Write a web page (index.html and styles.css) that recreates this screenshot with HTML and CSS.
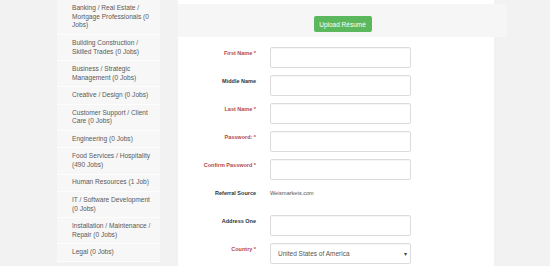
FILE: index.html
```html
<!DOCTYPE html>
<html>
<head>
<meta charset="utf-8">
<link rel="stylesheet" href="styles.css">
</head>
<body>
<div class="page">
  <aside class="sidebar">
    <ul class="cats">
      <li>Banking / Real Estate / Mortgage Professionals (0 Jobs)</li>
      <li>Building Construction / Skilled Trades (0 Jobs)</li>
      <li>Business / Strategic Management (0 Jobs)</li>
      <li>Creative / Design (0 Jobs)</li>
      <li>Customer Support / Client Care (0 Jobs)</li>
      <li>Engineering (0 Jobs)</li>
      <li>Food Services / Hospitality (490 Jobs)</li>
      <li>Human Resources (1 Job)</li>
      <li>IT / Software Development (0 Jobs)</li>
      <li>Installation / Maintenance / Repair (0 Jobs)</li>
      <li>Legal (0 Jobs)</li>
    </ul>
  </aside>
  <main class="panel">
    <div class="band">
      <button class="btn-upload">Upload Résumé</button>
    </div>
    <form class="form">
      <div class="row"><label class="lbl req">First Name *</label><div class="input"></div></div>
      <div class="row"><label class="lbl">Middle Name</label><div class="input"></div></div>
      <div class="row"><label class="lbl req">Last Name *</label><div class="input"></div></div>
      <div class="row"><label class="lbl req">Password: *</label><div class="input"></div></div>
      <div class="row"><label class="lbl req">Confirm Password *</label><div class="input"></div></div>
      <div class="row"><label class="lbl">Referral Source</label><div class="static">Weismarkets.com</div></div>
      <div class="row"><label class="lbl">Address One</label><div class="input"></div></div>
      <div class="row"><label class="lbl req">Country *</label><div class="input select"><span>United States of America</span><span class="caret">&#9662;</span></div></div>
    </form>
  </main>
</div>
</body>
</html>
```
FILE: styles.css
```css
html, body {
  margin: 0;
  padding: 0;
}
body {
  background: #f2f2f2;
  font-family: "Liberation Sans", Arial, sans-serif;
  width: 550px;
  height: 266px;
  overflow: hidden;
}
.page {
  display: flex;
  align-items: flex-start;
  padding-left: 57px;
  gap: 18px;
}
.sidebar {
  width: 103px;
  flex: none;
  background: #f7f7f7;
}
.cats {
  list-style: none;
  margin: 0;
  padding: 0;
}
.cats li {
  font-size: 6.6px;
  line-height: 8.8px;
  color: #5a5a5a;
  padding: 3.8px 8px 3.8px 15px;
  border-bottom: 1px solid #fdfdfd;
}
.panel {
  width: 316px;
  flex: none;
  background: #fff;
  height: 266px;
  padding-top: 4px;
  box-sizing: border-box;
}
.band {
  width: 329px;
  height: 33px;
  background: #f6f6f6;
  display: flex;
  align-items: center;
  justify-content: center;
}
.btn-upload {
  width: 58px;
  height: 16px;
  padding: 0;
  margin-top: 7px;
  border: none;
  border-radius: 2px;
  background: #5cb85c;
  color: #fff;
  font-family: "Liberation Sans", Arial, sans-serif;
  font-size: 6.5px;
}
.form {
  margin: 10px 0 0 0;
  display: flex;
  flex-direction: column;
  gap: 7px;
}
.row {
  display: flex;
  align-items: flex-start;
  height: 21px;
}
.lbl {
  width: 78px;
  flex: none;
  text-align: right;
  font-size: 5.5px;
  font-weight: bold;
  line-height: 9px;
  padding-top: 2px;
  color: #333;
}
.lbl.req {
  color: #b5484a;
}
.input {
  margin-left: 14px;
  width: 141px;
  height: 21px;
  box-sizing: border-box;
  border: 1px solid #dcdcdc;
  border-radius: 2px;
  box-shadow: inset 0 1px 1px rgba(0, 0, 0, 0.04);
  background: #fff;
}
.static {
  margin-left: 14px;
  font-size: 5.5px;
  line-height: 9px;
  padding-top: 2px;
  color: #555;
}
.select {
  display: flex;
  align-items: center;
  justify-content: space-between;
  padding: 0 3px 0 7px;
  font-size: 6.5px;
  color: #555;
}
.caret {
  font-size: 6px;
  color: #444;
}
```
